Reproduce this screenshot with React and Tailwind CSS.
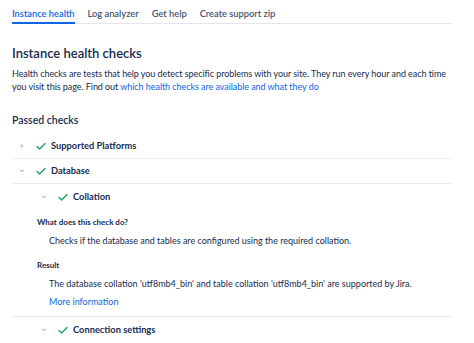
import React from 'react';

const font = { fontFamily: 'Lato, "Noto Sans", sans-serif' };

function Chevron({ open }) {
  return (
    <svg className="w-[8px] h-[8px] text-[#8590a2]" viewBox="0 0 8 8" fill="none" stroke="currentColor" strokeWidth={1} strokeLinecap="round" strokeLinejoin="round">
      {open ? <path d="M2.6 3.2l1.4 1.4 1.4-1.4" /> : <path d="M3.3 2.6l1.4 1.4-1.4 1.4" />}
    </svg>
  );
}

function Tick() {
  return (
    <svg className="w-[10px] h-[10px] text-[#22a06b]" viewBox="0 0 10 10" fill="none" stroke="currentColor" strokeWidth={1.4} strokeLinecap="round" strokeLinejoin="round">
      <path d="M1 5.4l2.6 2.5L9 2.4" />
    </svg>
  );
}

function CheckRow({ label, open, nested, border = true }) {
  return (
    <div className={`flex items-center h-[25px] ${border ? 'border-b border-[#ebecf0]' : ''} ${nested ? 'pl-[25px]' : 'pl-[3px]'}`}>
      <span className="w-[14px] flex justify-center"><Chevron open={open} /></span>
      <span className="ml-[7px] flex"><Tick /></span>
      <span className="ml-[5px] text-[9.3px] leading-[12px] font-bold text-[#172b4d]">{label}</span>
    </div>
  );
}

export default function App() {
  const tabs = ['Instance health', 'Log analyzer', 'Get help', 'Create support zip'];
  return (
    <div className="bg-white w-[474px] h-[343px] overflow-hidden pl-[12px] pr-[22px]" style={font}>
      <div className="flex gap-[13px] border-b border-[#e4e6ea] h-[24px]">
        {tabs.map((t, i) => (
          <div
            key={t}
            className={`h-[24px] pt-[7px] text-[9.3px] leading-[14px] font-semibold ${i === 0 ? 'text-[#0c66e4] border-b-2 border-[#0c66e4]' : 'text-[#44546f]'}`}
          >
            {t}
          </div>
        ))}
      </div>

      <h1 className="mt-[21px] text-[13px] leading-[16px] font-semibold text-[#172b4d]">Instance health checks</h1>
      <p className="mt-[6px] text-[9px] leading-[13px] tracking-[-0.06px] text-[#172b4d]">
        Health checks are tests that help you detect specific problems with your site. They run every hour and each time you visit this page. Find out <span className="text-[#0c66e4]">which health checks are available and what they do</span>
      </p>

      <h2 className="mt-[20px] text-[10.5px] leading-[14px] font-semibold text-[#172b4d]">Passed checks</h2>

      <div className="mt-[7px]">
        <CheckRow label="Supported Platforms" />
        <CheckRow label="Database" open />
        <CheckRow label="Collation" open nested border={false} />
        <div className="pl-[25px] pb-[8px] border-b border-[#ebecf0]">
          <div className="mt-[8px] text-[8px] leading-[10px] font-bold text-[#172b4d]">What does this check do?</div>
          <div className="mt-[7px] pl-[12px] text-[9px] leading-[13px] text-[#172b4d]">Checks if the database and tables are configured using the required collation.</div>
          <div className="mt-[13px] text-[8px] leading-[10px] font-bold text-[#172b4d]">Result</div>
          <div className="mt-[7px] pl-[12px] text-[9px] leading-[13px] text-[#172b4d]">The database collation 'utf8mb4_bin' and table collation 'utf8mb4_bin' are supported by Jira.</div>
          <div className="mt-[5px] pl-[12px] text-[9px] leading-[13px] text-[#0c66e4]">More information</div>
        </div>
        <CheckRow label="Connection settings" open nested border={false} />
      </div>
    </div>
  );
}
